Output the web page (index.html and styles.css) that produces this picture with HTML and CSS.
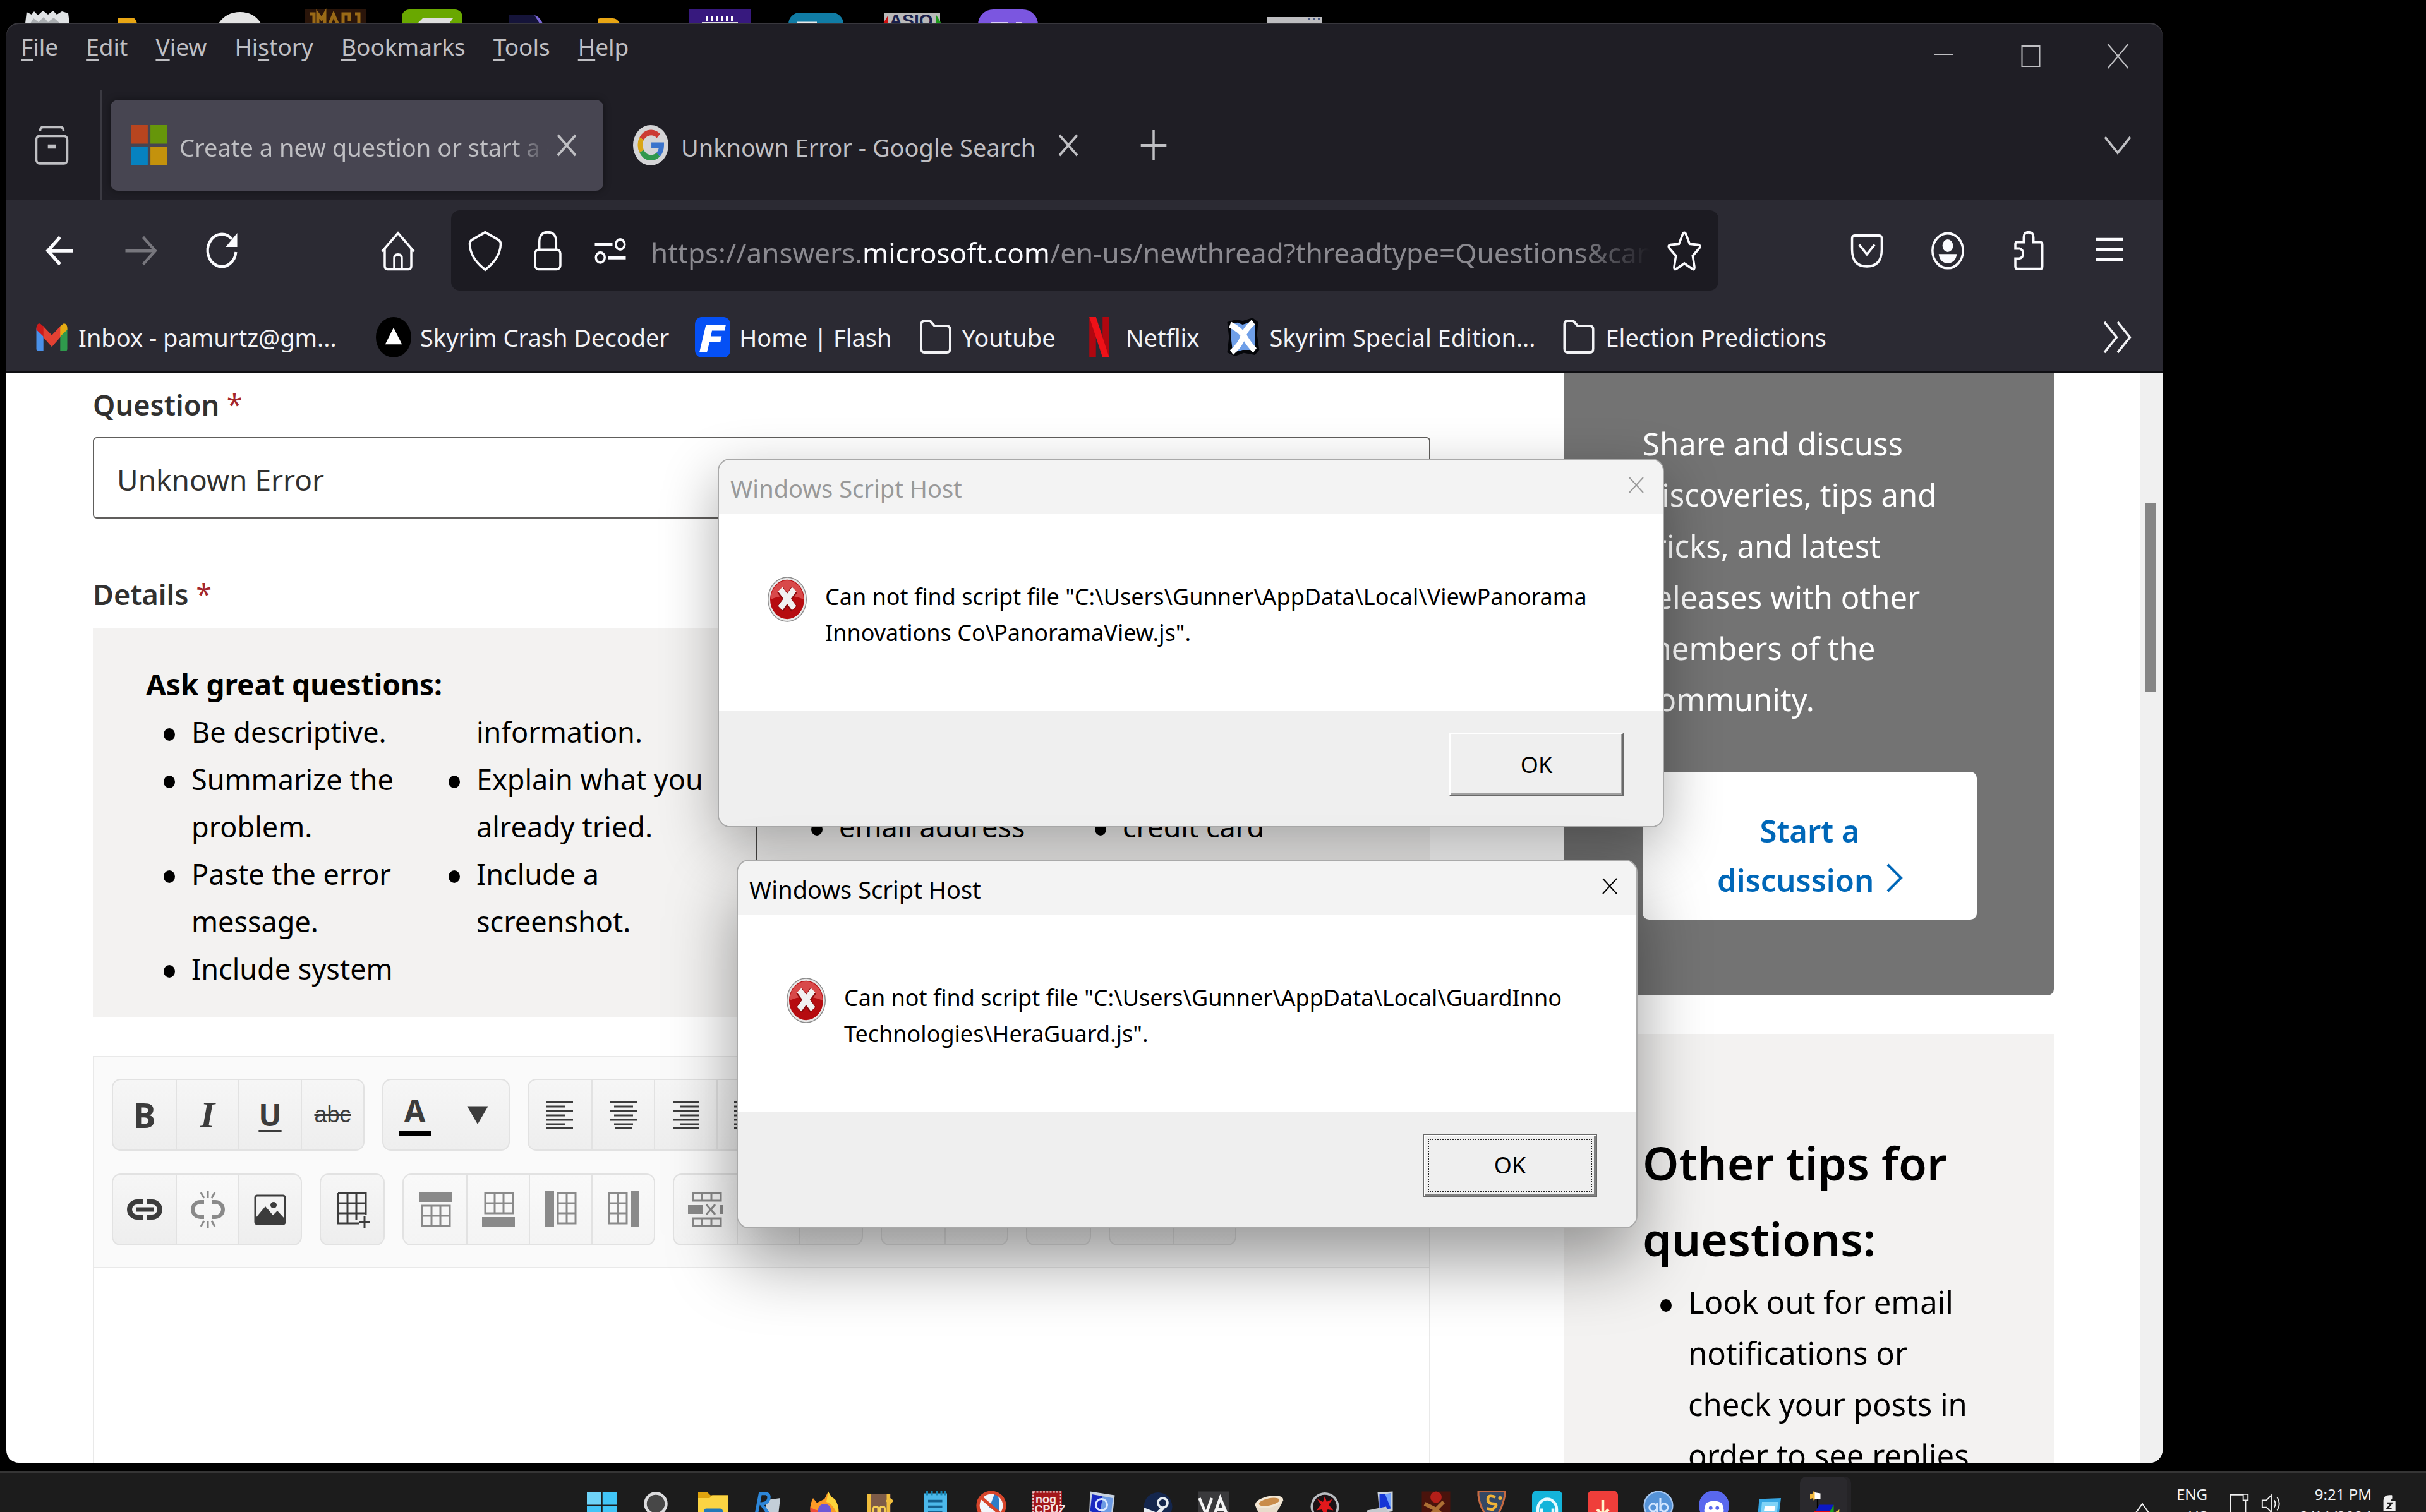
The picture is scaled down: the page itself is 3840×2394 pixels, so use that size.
FILE: index.html
```html
<!DOCTYPE html>
<html lang="en">
  <head>
    <title>Create a new question or start a discussion</title>
    <meta charset="UTF-8">
    <meta name="viewport" content="width=device-width, initial-scale=1.0">
    <link rel="stylesheet" href="styles.css">
  </head>
  <body>
    <!-- shared icons -->
    <svg class="defs" aria-hidden="true">
      <symbol id="i-x" viewBox="0 0 16 16" preserveAspectRatio="none"><path d="M4 4l8 8M12 4l-8 8"/></symbol>
      <symbol id="i-folder" viewBox="0 0 16 16" preserveAspectRatio="none"><path d="M1.500 3q0-1.500 1.500-1.500h2.500l2 2H13q1.500 0 1.500 1.500v7.500q0 1.500-1.500 1.500H3q-1.500 0-1.500-1.500z"/></symbol>
      <symbol id="i-error" viewBox="0 0 32 32" preserveAspectRatio="none">
        <circle cx="16" cy="16" r="15.500" fill="#8c8c8c"/>
        <circle cx="16" cy="16" r="14.800" fill="#e9e9e9"/>
        <circle cx="16" cy="16" r="13.500" fill="#b60c10"/>
        <path d="M3 16a13 13 0 0 1 26 0q-13-5-26 0z" fill="#d8494a"/>
        <path d="M10.500 9.500l11 13M21.500 9.500l-11 13" fill="none" stroke="#8d0a0d" stroke-width="6"/>
        <path d="M10.500 9l11 13M21.500 9l-11 13" fill="none" stroke="#f1f1f1" stroke-width="4.500"/>
      </symbol>
    </svg>

    <!-- desktop icons behind the browser -->
    <svg class="desk" viewBox="0 0 2100 37" width="2100" height="37" aria-hidden="true">
      <path d="M40 37l2-18 8 4 4-5 6 6 8-7 8 6 8-6 6 6 8-5 10 3 2 16z" fill="#dfe2e4"/>
      <path d="M48 37l5-8 8 6 8-8 7 8 9-7 10 9z" fill="#a9adb0"/>
      <path d="M186 37v-6q0-3 4-3h20q4 0 7 9z" fill="#e8a614"/>
      <path d="M346 37q12-18 34-18t33 18z" fill="#e3e3e3"/>
      <rect x="483" y="15" width="97" height="22" fill="#2a150a"/>
      <path d="M491 22h6v15M503 37V22l6 8 5-8v15M522 37l6-14 6 14M543 37V22h10v12M562 22h6v15" fill="none" stroke="#9a6a16" stroke-width="5"/>
      <rect x="636" y="15" width="96" height="40" rx="12" fill="#69a800"/>
      <path d="M661 37l8-8h48l-6 8z" fill="#dedede"/>
      <path d="M806 24h40q8 2 12 13h-52z" fill="#15143a"/>
      <path d="M846 24q8 2 13 13h-5z" fill="#7b68d8"/>
      <path d="M946 37v-5q0-3 4-3h20q7 0 11 8z" fill="#e8a614"/>
      <rect x="1091" y="15" width="97" height="22" fill="#37197e"/>
      <path d="M1119 26v8M1127 26v8M1135 26v8M1143 26v8M1151 26v8M1159 26v8" stroke="#fff" stroke-width="4"/>
      <path d="M1111 36h57" stroke="#ddd" stroke-width="2"/>
      <rect x="1248" y="20" width="87" height="40" rx="18" fill="#107ca5"/>
      <path d="M1261 36h32" stroke="#e8e8e8" stroke-width="3"/>
      <rect x="1399" y="20" width="89" height="17" fill="#b9b9b9"/>
      <text x="1408" y="42" class="asio">ASIO</text>
      <path d="M1398 37l8-13v13z" fill="#d01010"/>
      <path d="M1490 37l-8-13v13z" fill="#1c9a1c"/>
      <rect x="1548" y="15" width="95" height="50" rx="24" fill="#7b56e0"/>
      <path d="M1568 36h28M1608 36h10" stroke="#d9cdf8" stroke-width="2"/>
      <path d="M2006 37V27h87v10z" fill="#bdbdc0"/>
      <path d="M2070 30h4M2078 30h4M2086 30h4" stroke="#4a5a80" stroke-width="3"/>
    </svg>

    <div class="browser">
      <div class="titlebar">
        <nav class="menus">
          <button><u>F</u>ile</button>
          <button><u>E</u>dit</button>
          <button><u>V</u>iew</button>
          <button>Hi<u>s</u>tory</button>
          <button><u>B</u>ookmarks</button>
          <button><u>T</u>ools</button>
          <button><u>H</u>elp</button>
        </nav>
        <div class="winbtns">
          <button aria-label="Minimize"><svg viewBox="0 0 32 38"><path d="M1 16h30"/></svg></button>
          <button aria-label="Maximize"><svg viewBox="0 0 32 38"><path d="M2 3h28v32H2z"/></svg></button>
          <button aria-label="Close"><svg viewBox="0 0 32 38"><path d="M0 0l32 38M32 0L0 38"/></svg></button>
        </div>
      </div>

      <div class="tabs">
        <button class="fxview" aria-label="Firefox View">
          <svg class="ic" viewBox="0 0 16 16" preserveAspectRatio="none"><path d="M2.700 2.400q0-1.600 1.500-1.600h7.600q1.500 0 1.500 1.600"/><rect x="1" y="4.300" width="14" height="10.900" rx="1.500"/><path d="M6.200 8.500h3.600" stroke-width="1.600"/></svg>
        </button>
        <div class="tab active">
          <svg class="ic fav" viewBox="0 0 16 16" preserveAspectRatio="none"><path d="M0 0h7.400v7.400H0z" fill="#b8451f"/><path d="M8.600 0H16v7.400H8.600z" fill="#66960a"/><path d="M0 8.600h7.400V16H0z" fill="#0682c0"/><path d="M8.600 8.600H16V16H8.600z" fill="#c4920c"/></svg>
          <span class="tabname">Create a new question or start a discussion</span>
          <button class="close" aria-label="Close tab"><svg class="ic"><use href="#i-x"/></svg></button>
        </div>
        <div class="tab">
          <svg class="ic fav" viewBox="0 0 16 16" preserveAspectRatio="none"><circle cx="8" cy="8" r="8" fill="#d4d4d6"/><g fill="none" stroke-width="2.200"><path d="M11.500 4.300A4.900 4.900 0 0 0 3.900 5.400" stroke="#cc3a34"/><path d="M3.900 5.400a4.900 4.900 0 0 0 0 5" stroke="#d9a514"/><path d="M3.900 10.400a4.900 4.900 0 0 0 7.500 1.300" stroke="#30984c"/><path d="M11.400 11.700q1.500-1.500 1.500-3.700H8.300" stroke="#3a74cc"/></g></svg>
          <span class="tabname full">Unknown Error - Google Search</span>
          <button class="close" aria-label="Close tab"><svg class="ic"><use href="#i-x"/></svg></button>
        </div>
        <button class="newtab" aria-label="New tab"><svg class="ic" viewBox="0 0 16 16" preserveAspectRatio="none"><path d="M8 2v12M2.200 8h11.600"/></svg></button>
        <button class="alltabs" aria-label="List all tabs"><svg class="ic" viewBox="0 0 16 16" preserveAspectRatio="none"><path d="M2.300 4.800L8 11l5.700-6.200"/></svg></button>
      </div>

      <div class="nav">
        <button aria-label="Back"><svg class="ic" viewBox="0 0 16 16" preserveAspectRatio="none"><path d="M14 8H2.500M8 2.600L2.500 8 8 13.400" stroke-width="1.400"/></svg></button>
        <button class="dim" aria-label="Forward"><svg class="ic" viewBox="0 0 16 16" preserveAspectRatio="none"><path d="M1 8h13M9 2.600L14.500 8 9 13.400" stroke-width="1.200"/></svg></button>
        <button aria-label="Reload"><svg class="ic" viewBox="0 0 16 16" preserveAspectRatio="none"><path d="M12.600 3.400A6.400 6.400 0 1 0 14.400 8.500" stroke-width="1.200"/><path d="M15 1v5.500H9.800z" fill="#fbfbfe" stroke="none"/></svg></button>
        <button class="home" aria-label="Home"><svg class="ic" viewBox="0 0 16 16" preserveAspectRatio="none"><path d="M.8 8.300L8 1l7.200 7.300M2 7.500V14q0 1.300 1.300 1.300h9.400Q14 15.300 14 14V7.500M6.300 15v-4q0-1.500 1.700-1.500t1.700 1.500v4"/></svg></button>
        <div class="urlbar">
          <button aria-label="Tracking protection"><svg class="ic" viewBox="0 0 16 16" preserveAspectRatio="none"><path d="M8 .7l6 3q1 .5 1 1.600Q14.800 11 8 15.500 1.200 11 1 5.300 1 4.200 2 3.700z"/></svg></button>
          <button aria-label="Site information"><svg class="ic" viewBox="0 0 16 16" preserveAspectRatio="none"><rect x="2.300" y="7.600" width="11.400" height="7.700" rx="1.500"/><path d="M4.200 7.600V4.500q0-3.800 3.800-3.800t3.800 3.800v3.100"/></svg></button>
          <button aria-label="Permissions"><svg class="ic" viewBox="0 0 16 16" preserveAspectRatio="none"><path d="M1 5.600h8M15 10.800H7" stroke-width="1.300"/><circle cx="12.500" cy="5.500" r="2"/><circle cx="3.500" cy="10.700" r="2"/></svg></button>
          <div class="url" role="textbox" aria-label="Address" tabindex="0">https://answers.<b>microsoft.com</b>/en-us/newthread?threadtype=Questions&amp;cancelurl=%2Fen-us</div>
          <button class="star" aria-label="Bookmark this page"><svg class="ic" viewBox="0 0 16 16" preserveAspectRatio="none"><path d="M8 .9q.5 0 .8.700l1.600 3.700 4 .4q1.200.3.400 1.300l-3 3 .8 4.500q0 1.200-1 .7L8 13l-3.600 2.200q-1 .5-1-.7l.8-4.500-3-3q-.8-1 .4-1.300l4-.4L7.200 1.600Q7.500.9 8 .9z"/></svg></button>
        </div>
        <button aria-label="Pocket"><svg class="ic" viewBox="0 0 16 16" preserveAspectRatio="none"><path d="M2.500 2h11q1.200 0 1.200 1.200v4.300q0 6.700-6.700 6.700T1.300 7.500V3.200Q1.300 2 2.500 2zM4.500 5.600L8 9.400l3.500-3.800"/></svg></button>
        <button aria-label="Account"><svg class="ic" viewBox="0 0 16 16" preserveAspectRatio="none"><circle cx="8" cy="8" r="6.900"/><g fill="#fbfbfe" stroke="none"><ellipse cx="8" cy="6" rx="2.400" ry="2.500"/><path d="M3.900 9.300h8.200q-.6 3.600-4.100 3.600T3.900 9.300z"/></g></svg></button>
        <button aria-label="Extensions"><svg class="ic" viewBox="0 0 16 16" preserveAspectRatio="none"><path d="M2 5.300q0-.7.700-.7h3.100V2.700Q5.800.7 8 .7t2.200 2v1.900h3q1 0 1 1v8.600q0 1-1 1H3q-1 0-1-1v-3.100h1.800q1.700-.4 1.700-2T3.800 7.100H2z"/></svg></button>
        <button aria-label="Menu"><svg class="ic" viewBox="0 0 16 16" preserveAspectRatio="none"><path d="M2 3.600h12M2 7.600h12M2 11.600h12" stroke-width="1.300"/></svg></button>
      </div>

      <div class="bookmarks">
        <a href="#" class="mail"><svg class="ic logo" viewBox="0 0 16 16" preserveAspectRatio="none"><path d="M1 4.500L4.200 7v6.500H2q-1 0-1-1z" fill="#4a90e8"/><path d="M15 4.500L11.800 7v6.500H14q1 0 1-1z" fill="#2f9a4c"/><path d="M4 3.500L8 7.200l4-3.700v4.300l-4 4-4-4z" fill="#e34133"/><path d="M1 4.200Q1.200 2.300 2.800 2.600L4.200 3.700v4L1 5z" fill="#cc1b1b"/><path d="M15 4.200q-.2-1.900-1.800-1.600l-1.400 1.100v4L15 5z" fill="#e5ab13"/></svg>Inbox - pamurtz@gm...</a>
        <a href="#"><svg class="ic logo" viewBox="0 0 16 16" preserveAspectRatio="none"><circle cx="8" cy="8" r="8" fill="#000"/><path d="M8 4.200l3.800 6.600H4.200z" fill="#fff"/></svg>Skyrim Crash Decoder</a>
        <a href="#"><svg class="ic logo" viewBox="0 0 16 16" preserveAspectRatio="none"><rect width="16" height="16" rx="3" fill="#0550f5"/><path d="M5 3h9l-.6 2.400H7.700L7.200 7.600h4.900l-.6 2.300H6.600L5.400 14H2z" fill="#fff"/></svg>Home | Flash</a>
        <a href="#"><svg class="ic"><use href="#i-folder"/></svg>Youtube</a>
        <a href="#"><svg class="ic logo" viewBox="0 0 16 16" preserveAspectRatio="none"><path d="M3.500 0h3v16h-3zM9.500 0h3v16h-3z" fill="#b00710"/><path d="M3.500 0h3l6 16h-3z" fill="#ee1118"/></svg>Netflix</a>
        <a href="#"><svg class="ic logo" viewBox="0 0 16 16" preserveAspectRatio="none"><path d="M1 2l4-1 3 .5L12.500.3 15 2l-.5 5 1 6-2 2-5-.8-4 1.300L1 14l.8-6z" fill="#05060a"/><path d="M2.500 3l3-.8L8 3l4-1.200L13.500 3v10L8 13l-4.500 1-.8-6z" fill="#6f9fe8"/><path d="M2.300 3Q7 5 9 8t4.500 5.200M12.800 2Q9 5 8 8t-5 6" fill="none" stroke="#fff" stroke-width="2.400"/></svg>Skyrim Special Edition...</a>
        <a href="#"><svg class="ic"><use href="#i-folder"/></svg>Election Predictions</a>
        <button class="more" aria-label="More bookmarks"><svg class="ic" viewBox="0 0 16 16" preserveAspectRatio="none"><path d="M2 2l5.500 6L2 14M8 2l5.500 6L8 14"/></svg></button>
      </div>

      <div class="view">
        <main class="page">
          <form class="ask">
            <label for="question">Question <em>*</em></label>
            <input id="question" type="text" value="Unknown Error">
            <label for="details">Details <em>*</em></label>
            <div class="hints">
              <section class="hint">
                <h3>Ask great questions:</h3>
                <ul>
                  <li>Be descriptive.</li>
                  <li>Summarize the problem.</li>
                  <li>Paste the error message.</li>
                  <li>Include system information.</li>
                  <li>Explain what you already tried.</li>
                  <li>Include a screenshot.</li>
                </ul>
              </section>
              <section class="hint private">
                <ul>
                  <li>email address</li>
                  <li>phone number</li>
                  <li>credit card numbers</li>
                </ul>
              </section>
            </div>

            <div class="editor">
              <div class="tools">
                <div class="row">
                  <div class="group">
                    <button type="button" class="g b">B</button>
                    <button type="button" class="g i">I</button>
                    <button type="button" class="g un">U</button>
                    <button type="button" class="g abc">abc</button>
                  </div>
                  <div class="group">
                    <button type="button" class="g color">A</button>
                    <button type="button" class="nb" aria-label="Pick colour"><svg viewBox="0 0 46 44"><path d="M9 10h28L23 34z" fill="#3c3c3c"/></svg></button>
                  </div>
                  <div class="group">
                    <button type="button" aria-label="Align left"><svg viewBox="0 0 46 44"><path d="M1 2h42M1 9h30M1 16h42M1 23h30M1 30h42M1 37h30M1 43h42"/></svg></button>
                    <button type="button" aria-label="Align centre"><svg viewBox="0 0 46 44"><path d="M2 2h42M8 9h30M2 16h42M8 23h30M2 30h42M8 37h30M10 43h26"/></svg></button>
                    <button type="button" aria-label="Align right"><svg viewBox="0 0 46 44"><path d="M2 2h42M14 9h30M2 16h42M14 23h30M2 30h42M14 37h30M2 43h42"/></svg></button>
                    <button type="button" aria-label="Justify"><svg viewBox="0 0 46 44"><path d="M0 2h44M0 9h44M0 16h44M0 23h44M0 30h44M0 37h44M0 43h44"/></svg></button>
                  </div>
                </div>
                <div class="row">
                  <div class="group">
                    <button type="button" aria-label="Insert link"><svg class="w" viewBox="0 0 56 60"><path d="M25 18h-9a12 12 0 0 0 0 24h9M31 18h9a12 12 0 0 1 0 24h-9" stroke-width="8"/><path d="M14 30h28" stroke-width="7"/></svg></button>
                    <button type="button" class="off" aria-label="Remove link"><svg class="w" viewBox="0 0 56 60"><path d="M22 18h-6a12 12 0 0 0 0 24h6M34 18h6a12 12 0 0 1 0 24h-6" stroke-width="6"/><path d="M28 0v12M17 3l5 9M39 3l-5 9M28 60V48M17 57l5-9M39 57l-5-9" stroke-width="3"/></svg></button>
                    <button type="button" aria-label="Insert image"><svg class="w" viewBox="0 0 56 60"><rect x="4" y="8" width="47" height="45" rx="3"/><path d="M5 43l15-18 12 14 7-7 11 12v8H5z" fill="#3c3c3c" stroke="none"/><circle cx="33" cy="23" r="5" fill="#3c3c3c" stroke="none"/></svg></button>
                  </div>
                  <div class="group">
                    <button type="button" aria-label="Insert table"><svg class="w" viewBox="0 0 56 60"><path d="M5 4h44v34M49 4v32M5 4v48h34M20 4v48M34 4v42M5 20h44M5 36h44M38 50h17M47 41v18"/></svg></button>
                  </div>
                  <div class="group off">
                    <button type="button" aria-label="Add row above"><svg class="w" viewBox="0 0 56 60"><path d="M2 3h52v15H2z" fill="#8a8a8a" stroke="none"/><path d="M7 24h44v32H7zM7 40h44M22 24v32M36 24v32"/></svg></button>
                    <button type="button" aria-label="Add row below"><svg class="w" viewBox="0 0 56 60"><path d="M2 42h52v15H2z" fill="#8a8a8a" stroke="none"/><path d="M7 4h44v32H7zM7 20h44M22 4v32M36 4v32"/></svg></button>
                    <button type="button" aria-label="Add column left"><svg class="w" viewBox="0 0 56 60"><path d="M3 1h14v57H3z" fill="#8a8a8a" stroke="none"/><path d="M23 4h28v48H23zM37 4v48M23 20h28M23 36h28"/></svg></button>
                    <button type="button" aria-label="Add column right"><svg class="w" viewBox="0 0 56 60"><path d="M39 1h14v57H39z" fill="#8a8a8a" stroke="none"/><path d="M5 4h28v48H5zM19 4v48M5 20h28M5 36h28"/></svg></button>
                  </div>
                  <div class="group off">
                    <button type="button" aria-label="Delete row"><svg class="w" viewBox="0 0 56 60"><path d="M0 23h24v14H0zM50 23h6v14h-6z" fill="#8a8a8a" stroke="none"/><path d="M8 4h44v12H8zM22 4v12M37 4v12M8 44h44v12H8zM22 44v12M37 44v12M29 22l14 16M43 22L29 38"/></svg></button>
                    <button type="button" aria-label="Delete column"><svg class="w" viewBox="0 0 56 60"><path d="M22 0h14v24H22zM22 50h14v10H22z" fill="#8a8a8a" stroke="none"/></svg></button>
                    <button type="button" aria-label="Delete table"></button>
                  </div>
                  <div class="group off"><button type="button" aria-label="Undo"></button><button type="button" aria-label="Redo"></button></div>
                  <div class="group off"><button type="button" aria-label="Clean up"></button></div>
                  <div class="group off"><button type="button" aria-label="Indent"></button><button type="button" aria-label="Outdent"></button></div>
                </div>
              </div>
              <textarea id="details"></textarea>
            </div>
          </form>

          <aside class="side">
            <div class="card dark">
              <p>Share and discuss discoveries, tips and tricks, and latest releases with other members of the community.</p>
              <a class="start" href="#">Start a<br>discussion <svg viewBox="0 0 24 44"><path d="M1 1l21 21L1 43"/></svg></a>
            </div>
            <div class="card tips">
              <h2>Other tips for questions:</h2>
              <ul>
                <li>Look out for email notifications or check your posts in order to see replies</li>
              </ul>
            </div>
          </aside>
        </main>
        <div class="scroll"><div class="thumb"></div></div>
      </div>
    </div>

    <div class="dialog first" role="dialog" aria-label="Windows Script Host">
      <header>Windows Script Host<button class="x" aria-label="Close"><svg viewBox="0 0 24 26"><path d="M1 1l22 24M23 1L1 25"/></svg></button></header>
      <div class="msg">
        <svg class="err"><use href="#i-error"/></svg>
        <p>Can not find script file "C:\Users\Gunner\AppData\Local\ViewPanorama<br>Innovations Co\PanoramaView.js".</p>
      </div>
      <footer><button class="ok">OK</button></footer>
    </div>

    <div class="dialog second" role="dialog" aria-label="Windows Script Host">
      <header>Windows Script Host<button class="x" aria-label="Close"><svg viewBox="0 0 24 26"><path d="M1 1l22 24M23 1L1 25"/></svg></button></header>
      <div class="msg">
        <svg class="err"><use href="#i-error"/></svg>
        <p>Can not find script file "C:\Users\Gunner\AppData\Local\GuardInno<br>Technologies\HeraGuard.js".</p>
      </div>
      <footer><button class="ok"><span>OK</span></button></footer>
    </div>

    <div class="taskbar">
      <div class="apps">
        <svg viewBox="0 0 32 32"><path d="M0 2h15v13H0z" fill="#6fd3f7"/><path d="M16.500 2H32v13H16.500zM0 16.500h15V30H0zM16.500 16.500H32V30H16.500z" fill="#41c5f7"/></svg>
        <svg viewBox="0 0 32 32"><circle cx="14" cy="14" r="11" fill="#474747" stroke="#dcdcde" stroke-width="3"/></svg>
        <svg viewBox="0 0 32 32"><path d="M0 2h10l3 3h19v8H0z" fill="#e0a40e"/><path d="M0 8h12l3-3h17v27H0z" fill="#fbd443"/><path d="M6 22q0-3 3-3h14q3 0 3 3v9H6z" fill="#2277b8"/></svg>
        <svg viewBox="0 0 32 32"><path d="M14 10l14-2-3 26H10z" fill="#c3ced8"/><path d="M3 24L7 3h6q5 2 2 8-2 3-7 3l8 11" fill="none" stroke="#2d86d8" stroke-width="3.500"/></svg>
        <svg viewBox="0 0 32 32"><path d="M16 9l4-8q3 7 7 8 7 12 2 23H4q-6-13 0-24l4 5z" fill="#fb9a26"/><path d="M20 1q3 7 7 8 5 8 3 17-5-12-12-14z" fill="#fdd53b"/><circle cx="16" cy="21" r="7" fill="#6d57d6"/><path d="M1 17q3 3 8 4-1 8-4 11-4-6-4-15z" fill="#ee4d3a"/></svg>
        <svg viewBox="0 0 32 32"><path d="M2 4h25v28H2z" fill="#7d5b48"/><path d="M2 4h4v28H2zM23 4h3v28h-3zM22 11q4-6 8 0l-4 5z" fill="#f0bd3c"/><g fill="none" stroke="#f6cf55" stroke-width="2"><rect x="9" y="17" width="5" height="8" rx="2"/><rect x="16" y="17" width="5" height="8" rx="2"/></g></svg>
        <svg viewBox="0 0 32 32"><rect x="4" y="3" width="24" height="30" fill="#4bb8ea"/><path d="M8 11h15M8 17h15M8 23h15" stroke="#14608f" stroke-width="2.500"/><path d="M7 0v5M12 0v5M17 0v5M22 0v5M26 0v5" stroke="#1785b4" stroke-width="2"/></svg>
        <svg viewBox="0 0 32 32"><circle cx="16" cy="16" r="14" fill="#f2f6fa"/><path d="M14 18L20 2q6 4 4 20z" fill="#2e7cc8"/><circle cx="16" cy="16" r="14" fill="none" stroke="#d6452b" stroke-width="3.500"/><path d="M5 7l22 19" stroke="#d6452b" stroke-width="3.500"/></svg>
        <svg viewBox="0 0 32 32"><path d="M0 0h32v32H0z" fill="#a3171a"/><rect x="1.500" y="1.500" width="29" height="40" fill="none" stroke="#e8cfcf" stroke-width="1.500" stroke-dasharray="2 1.500"/><text x="4" y="13" class="cpu">nog</text><text x="3" y="24" class="cpu">CPUZ</text></svg>
        <svg viewBox="0 0 32 32"><path d="M3 1l26 4-3 27-24-7z" fill="#c9d3e0"/><path d="M5 4l11 2-2 19-11-3z" fill="#1829c0"/><path d="M16 6l11 2-2 19-11-2z" fill="#6d9be4"/><circle cx="15" cy="15" r="6" fill="none" stroke="#dce8ff" stroke-width="2"/></svg>
        <svg viewBox="0 0 32 32"><circle cx="16" cy="17" r="15" fill="#14264d"/><circle cx="21" cy="13" r="5" fill="#14264d" stroke="#e8edf3" stroke-width="2.500"/><path d="M1 18l13 5 5-5 4 1-7 8-15-4z" fill="#e8edf3"/></svg>
        <svg viewBox="0 0 32 32"><path d="M0 1h32v31H0z" fill="#3a3a3c"/><path d="M1 8l7 17L14 8M17 25l6-17 7 17M19 20h8" fill="none" stroke="#f4f4f4" stroke-width="3"/></svg>
        <svg viewBox="0 0 32 32"><path d="M1 15q4 12 13 17 8-3 17-22z" fill="#e8dccb"/><ellipse cx="16" cy="12" rx="15" ry="6" fill="#f2e7d5" transform="rotate(-12 16 12)"/><ellipse cx="16" cy="12" rx="11" ry="3.800" fill="#c98c4a" transform="rotate(-12 16 12)"/></svg>
        <svg viewBox="0 0 32 32"><circle cx="16" cy="17" r="15" fill="#b8bcc0"/><circle cx="16" cy="17" r="12.500" fill="#1b1114"/><path d="M16 6l2 6 6-3-4 6 5 6-6-1-3 7-3-7-6 1 5-6-4-6 6 3z" fill="#e0181c"/></svg>
        <svg viewBox="0 0 32 32"><path d="M13 2l16-1v21l-14 2z" fill="#ccd5dd"/><path d="M15 4l12-1v16l-12 2z" fill="#1536d6"/><path d="M21 4l6-1v16z" fill="#71a2ff"/><path d="M2 21l20-4 6 15H2z" fill="#c4c9ce"/></svg>
        <svg viewBox="0 0 32 32"><path d="M1 1h30v31H1z" fill="#4a130c"/><circle cx="16" cy="7" r="6" fill="#b51f19"/><path d="M4 14l12 6 8-8M8 28l8-8 9 8" fill="none" stroke="#ad7034" stroke-width="4"/></svg>
        <svg viewBox="0 0 32 32"><path d="M2 1h28v4q-4 20-14 27Q4 22 2 5z" fill="#354763" stroke="#c66a42" stroke-width="2"/><path d="M20 7q-8-3-8 2t6 5-1 6l-6-1" fill="none" stroke="#f2b437" stroke-width="3"/><circle cx="25" cy="8" r="2" fill="#f2b437"/></svg>
        <svg viewBox="0 0 32 32"><rect width="32" height="40" rx="5" fill="#14b4da"/><path d="M6 24v-4a10 11 0 0 1 20 0v4M10 19v13M22 19v13" fill="none" stroke="#e8fbff" stroke-width="3"/></svg>
        <svg viewBox="0 0 32 32"><rect width="32" height="40" rx="5" fill="#ef3e3a"/><path d="M16 10v15M10 20l6 6 6-6" fill="none" stroke="#fff4cc" stroke-width="3"/></svg>
        <svg viewBox="0 0 32 32"><circle cx="16" cy="16" r="15" fill="#5593d8" stroke="#a8c8f0" stroke-width="1.500"/><g fill="none" stroke="#d3e6ff" stroke-width="2"><circle cx="10.500" cy="18" r="4"/><path d="M14.500 13v13M18 8v14"/><circle cx="22" cy="18" r="4"/></g></svg>
        <svg viewBox="0 0 32 32"><circle cx="16" cy="16" r="16" fill="#5968ee"/><path d="M8 13q8-4 16 0 3 5 2 10l-5 2-1-2h-8l-1 2-5-2q-1-5 2-10z" fill="#fff"/><circle cx="12.500" cy="18.500" r="2" fill="#5968ee"/><circle cx="19.500" cy="18.500" r="2" fill="#5968ee"/></svg>
        <svg viewBox="0 0 32 32"><path d="M5 9l23-1-3 24H3z" fill="#36a6e2"/><path d="M8 12h17l-2 20H6z" fill="#7fd3f7"/><path d="M11 16h11l-1 6H10z" fill="#fff"/></svg>
        <span class="running"><svg viewBox="0 0 32 32"><path d="M8 18V6" stroke="#000" stroke-width="1.500"/><path d="M0 4l3-1 1-3 2 3h3v5H6l-2 3-1-3-3 1z" fill="#f1b73a"/><path d="M5 2l6 1v6H5z" fill="#fff"/><path d="M10 15h15l-4 7H6z" fill="#0b18c4"/><path d="M4 22h17v10H4z" fill="#e4070c"/><path d="M21 22l4-7v17h-4z" fill="#19a31d"/><path d="M25 24l6-4-1 10-5 2z" fill="#f1d04a"/></svg></span>
      </div>
      <div class="tray">
        <svg viewBox="0 0 24 24" class="up"><path d="M2 20L12 6l10 14"/></svg>
        <span>ENG<br>US</span>
        <svg viewBox="0 0 36 36" class="net"><path d="M23 3H3v30h20M24 2h8v10h-8zM28 12v20"/></svg>
        <svg viewBox="0 0 36 36" class="vol"><path d="M3 12h7l8-8v28l-8-8H3zM23 12q4 6 0 12M28 7q7 11 0 22"/></svg>
        <span>9:21 PM<br>3/11/2024</span>
        <svg viewBox="0 0 30 36" class="bell"><path d="M4 30V12q0-9 10-9h4v7h6v20z" fill="#eee"/><path d="M19 2h8l-8 9h8M10 17h8l-8 10h8"/></svg>
      </div>
    </div>
  </body>
</html>
```
FILE: styles.css
```css
* { box-sizing:border-box; }
html, body { height:100%; }
body
{
    margin:0;
    overflow:hidden;
    position:relative;
    background-color:#000;
    font-family:"Noto Sans", "Open Sans", sans-serif;
    font-size:38px;
}
button
{
    margin:0; padding:0; border:0;
    background:none;
    color:inherit;
    font:inherit;
}
a { color:inherit; text-decoration:none; }
h2, h3, p, ul { margin:0; padding:0; }
svg { display:block; flex:none; overflow:visible; }
.defs { position:absolute; width:0; height:0; }

/* list dots hang left of the text */
ul { list-style:none; }
li::before
{
    content:"";
    display:inline-block;
    width:18px; height:20px;
    margin:0 26px 0 -44px;
    border-radius:50%;
    background-color:#000;
    vertical-align:3px;
}

.desk { position:absolute; left:0; top:0; }
.asio { font:bold 28px "Liberation Sans", sans-serif; fill:#1a1f4a; }

/* browser window */
.browser
{
    position:absolute;
    left:10px; right:417px; top:36px; bottom:78px;
    display:flex;
    flex-direction:column;
    overflow:hidden;
    border-radius:20px;
    background-color:#1f1e25;
    color:#bfbfc3;
    box-shadow:inset 0 2px 0 #38373d;
}
.titlebar { display:flex; justify-content:space-between; height:106px; padding:0 2px 0 23px; }
.menus { display:flex; gap:44px; align-items:flex-start; padding-top:12px; font-size:37px; line-height:52px; }
.menus u { text-underline-offset:6px; text-decoration-thickness:3px; }
.winbtns { display:flex; height:106px; }
.winbtns button { width:138px; display:flex; justify-content:center; align-items:center; }
.winbtns svg { width:33px; height:38px; }
.winbtns path { fill:none; stroke:#bfbfc3; stroke-width:2; }

.ic
{
    width:56px; height:64px;
    fill:none;
    stroke:currentColor;
    stroke-width:1;
}
.logo, .fav { stroke:none; }
.tabs { display:flex; align-items:center; height:175px; padding-right:21px; }
.fxview { width:151px; height:175px; padding-left:44px; border-right:2px solid #3b3a42; }
.tab
{
    display:flex;
    align-items:center;
    height:144px;
    padding:0 30px 0 33px;
    margin-left:14px;
    border-radius:12px;
}
.tab.active { width:780px; background-color:#474551; box-shadow:0 0 12px rgba(0,0,0,0.4); }
.fav { margin-right:20px; }
.tabname
{
    flex:1;
    overflow:hidden;
    white-space:nowrap;
    padding-top:6px;
    line-height:60px;
    -webkit-mask-image:linear-gradient(to left, transparent, #000 60px);
    mask-image:linear-gradient(to left, transparent, #000 60px);
}
.tabname.full { flex:none; -webkit-mask-image:none; mask-image:none; }
.close { margin-left:24px; }
.active .close { margin-left:0; }
.newtab { margin-left:49px; }
.alltabs { margin-left:auto; margin-right:22px; }

.nav
{
    display:flex;
    align-items:center;
    height:159px;
    padding:0 20px 0 21px;
    background-color:#2b2a33;
    color:#fbfbfe;
}
.nav button { width:128px; display:flex; justify-content:center; }
.nav .dim { color:#77767d; }
.nav .home { margin-left:151px; }
.urlbar
{
    flex:1;
    display:flex;
    align-items:center;
    height:127px;
    margin:0 171px 0 20px;
    min-width:0;
    border-radius:14px;
    background-color:#1c1b22;
    padding-left:4px;
}
.nav .urlbar button { width:99px; }
.nav .urlbar .star { width:108px; }
.url
{
    flex:1;
    overflow:hidden;
    white-space:nowrap;
    margin-left:15px;
    padding-top:6px;
    font-size:44px;
    line-height:64px;
    color:#8b8a90;
    -webkit-mask-image:linear-gradient(to left, transparent, #000 120px);
    mask-image:linear-gradient(to left, transparent, #000 120px);
}
.url b { font-weight:400; color:#fbfbfe; }

.bookmarks
{
    display:flex;
    align-items:center;
    gap:41px;
    height:114px;
    padding:4px 43px 0 44px;
    background-color:#2b2a33;
    border-bottom:2px solid #0f0f13;
    color:#f2f2f5;
}
.bookmarks a { display:flex; align-items:center; gap:14px; white-space:nowrap; }
.bookmarks .mail { width:500px; }
.more { margin-left:auto; }

/* page */
.view { flex:1; display:flex; min-height:0; background-color:#fff; }
.page
{
    flex:1;
    display:grid;
    grid-template-columns:1fr 775px;
    gap:212px;
    padding:0 136px 0 137px;
    overflow:hidden;
    color:#000;
}
.scroll { width:36px; background-color:#f0f0f0; padding:206px 10px 0 8px; }
.thumb { height:300px; background-color:#858585; }

.ask { display:flex; flex-direction:column; min-width:0; }
.ask label { font-size:45px; font-weight:600; line-height:62px; color:#323130; padding-top:20px; }
.ask label em { font-style:normal; font-weight:400; color:#a4262c; }
.ask input
{
    height:129px;
    margin:20px 0 69px;
    padding:4px 36px 0;
    border:2px solid #605e5c;
    border-radius:6px;
    background-color:#fff;
    font:inherit;
    font-size:46px;
    color:#323130;
}
.hints { display:flex; margin-top:23px; background-color:#f3f2f1; height:616px; }
.hint { flex:none; width:1049px; padding:50px 31px 0 84px; font-size:45px; line-height:75px; }
.hint h3 { font-size:46px; line-height:76px; }
.hint ul { columns:2; column-gap:40px; padding-left:72px; margin-left:0; orphans:1; widows:1; height:450px; }
.private { flex:1; border-left:2px solid #484644; padding-top:276px; padding-left:58px; }
.private ul { height:150px; width:930px; column-fill:auto; }

.editor { margin-top:61px; border:2px solid #e9e9e9; border-bottom:0; flex:1; display:flex; flex-direction:column; }
.tools
{
    display:flex;
    flex-direction:column;
    gap:36px;
    padding:34px 28px;
    background-color:#fafafa;
    border-bottom:2px solid #e9e9e9;
}
.row { display:flex; gap:28px; }
.group
{
    display:flex;
    border:2px solid #e2e2e2;
    border-radius:14px;
    background-image:linear-gradient(#f6f6f6, #eeeeee);
}
.group button
{
    display:flex;
    align-items:center;
    justify-content:center;
    width:99px; height:110px;
    border-left:2px solid #e2e2e2;
    color:#3c3c3c;
}
.group button:first-child, .group .nb { border-left:0; }
.group svg { width:46px; height:44px; fill:none; stroke:#3c3c3c; stroke-width:3; }
.group .w { width:56px; height:60px; }
.group .off svg, .group.off svg { stroke:#8a8a8a; }
.off { background-image:linear-gradient(#f9f9f9, #f4f4f4); }
.g { font-size:54px; font-weight:700; line-height:54px; }
.g.i { font-family:"Liberation Serif", serif; font-style:italic; font-size:60px; }
.g.un { text-decoration:underline; text-decoration-thickness:3px; text-underline-offset:6px; font-size:48px; }
.g.abc { font-family:"Liberation Sans", sans-serif; font-size:36px; font-weight:400; text-decoration:line-through; }
.group .color { flex-direction:column; font-size:48px; }
.color::after { content:""; width:50px; height:8px; margin-top:6px; background-color:#000; }
.editor textarea { flex:1; border:0; resize:none; background-color:#fff; }

.side { display:flex; flex-direction:column; gap:61px; font-size:49px; line-height:81px; }
.card { padding:0 122px 0 124px; }
.dark { background-color:#737373; color:#fff; padding-top:72px; padding-bottom:120px; border-radius:0 0 10px 10px; }
.start
{
    display:block;
    margin-top:74px;
    padding:54px 20px 24px;
    border-radius:10px;
    background-color:#fff;
    color:#0067b8;
    font-weight:600;
    line-height:78px;
    text-align:center;
}
.start svg { display:inline-block; width:24px; height:44px; margin-left:8px; fill:none; stroke:#0067b8; stroke-width:4; }
.tips { background-color:#f3f2f1; padding-top:144px; flex:1; }
.tips h2 { font-size:73px; font-weight:600; line-height:120px; }
.tips ul { padding-left:72px; }

/* script host message boxes */
.dialog
{
    position:absolute;
    display:flex;
    flex-direction:column;
    overflow:hidden;
    border-radius:20px;
    border:2px solid #a9a9a9;
    background-color:#fff;
    font-size:36px;
    line-height:57px;
    color:#000;
}
.first { left:1136px; top:726px; width:1498px; box-shadow:0 30px 90px rgba(0,0,0,0.32); }
.second { left:1166px; top:1361px; width:1426px; box-shadow:0 50px 110px rgba(0,0,0,0.4); }
.dialog header
{
    display:flex;
    justify-content:space-between;
    height:86px;
    padding:17px 30px 0 18px;
    background-color:#f3f3f3;
    font-size:38px;
}
.first header { color:#999; }
.x { height:46px; }
.x svg { width:24px; height:26px; fill:none; stroke:currentColor; stroke-width:2; }
.msg { display:flex; gap:28px; height:312px; padding:98px 40px 0 76px; white-space:nowrap; }
.msg p { padding-top:4px; }
.err { width:64px; height:74px; }
.dialog footer { height:182px; display:flex; justify-content:flex-end; align-items:flex-start; padding:34px 62px 0 0; background-color:#efefef; }
.ok
{
    width:276px; height:100px;
    border:2px solid;
    border-color:#fff #696969 #696969 #fff;
    box-shadow:inset -2px -2px 0 #a0a0a0;
}
.second .ok { border-color:#696969; padding:6px; box-shadow:inset 2px 2px 0 #fff, inset -3px -3px 0 #808080; }
.second .ok span { display:block; height:84px; line-height:80px; border:2px dotted #222; }

/* taskbar */
.taskbar
{
    position:absolute;
    left:0; right:0; bottom:0;
    height:65px;
    overflow:hidden;
    display:flex;
    align-items:flex-start;
    border-top:3px solid #353535;
    background-color:#1c1c1c;
    color:#f0f0f0;
}
.apps { display:flex; gap:40px; padding:24px 0 0 929px; }
.apps svg { width:48px; height:56px; }
.running { margin:-18px 0 0 -16px; padding:18px 11px 0 16px; background-color:#2a292d; border-radius:10px; box-shadow:6px 0 0 #252427; }
.cpu { font:bold 12px "Liberation Sans", sans-serif; fill:#f3e3e3; }
.tray { flex:1; display:flex; justify-content:flex-end; gap:16px; padding:16px 44px 0 0; font-size:24px; line-height:35px; text-align:right; white-space:nowrap; }
.tray svg { width:34px; height:38px; margin-top:14px; fill:none; stroke:#f0f0f0; stroke-width:2; }
.tray .up { width:24px; height:30px; margin-right:26px; margin-top:24px; }
.tray .net { margin-left:18px; }
.tray .vol { margin-right:12px; }
.tray .bell { width:26px; }
.tray .bell path + path { stroke:#1c1c1c; stroke-width:3; }
```
